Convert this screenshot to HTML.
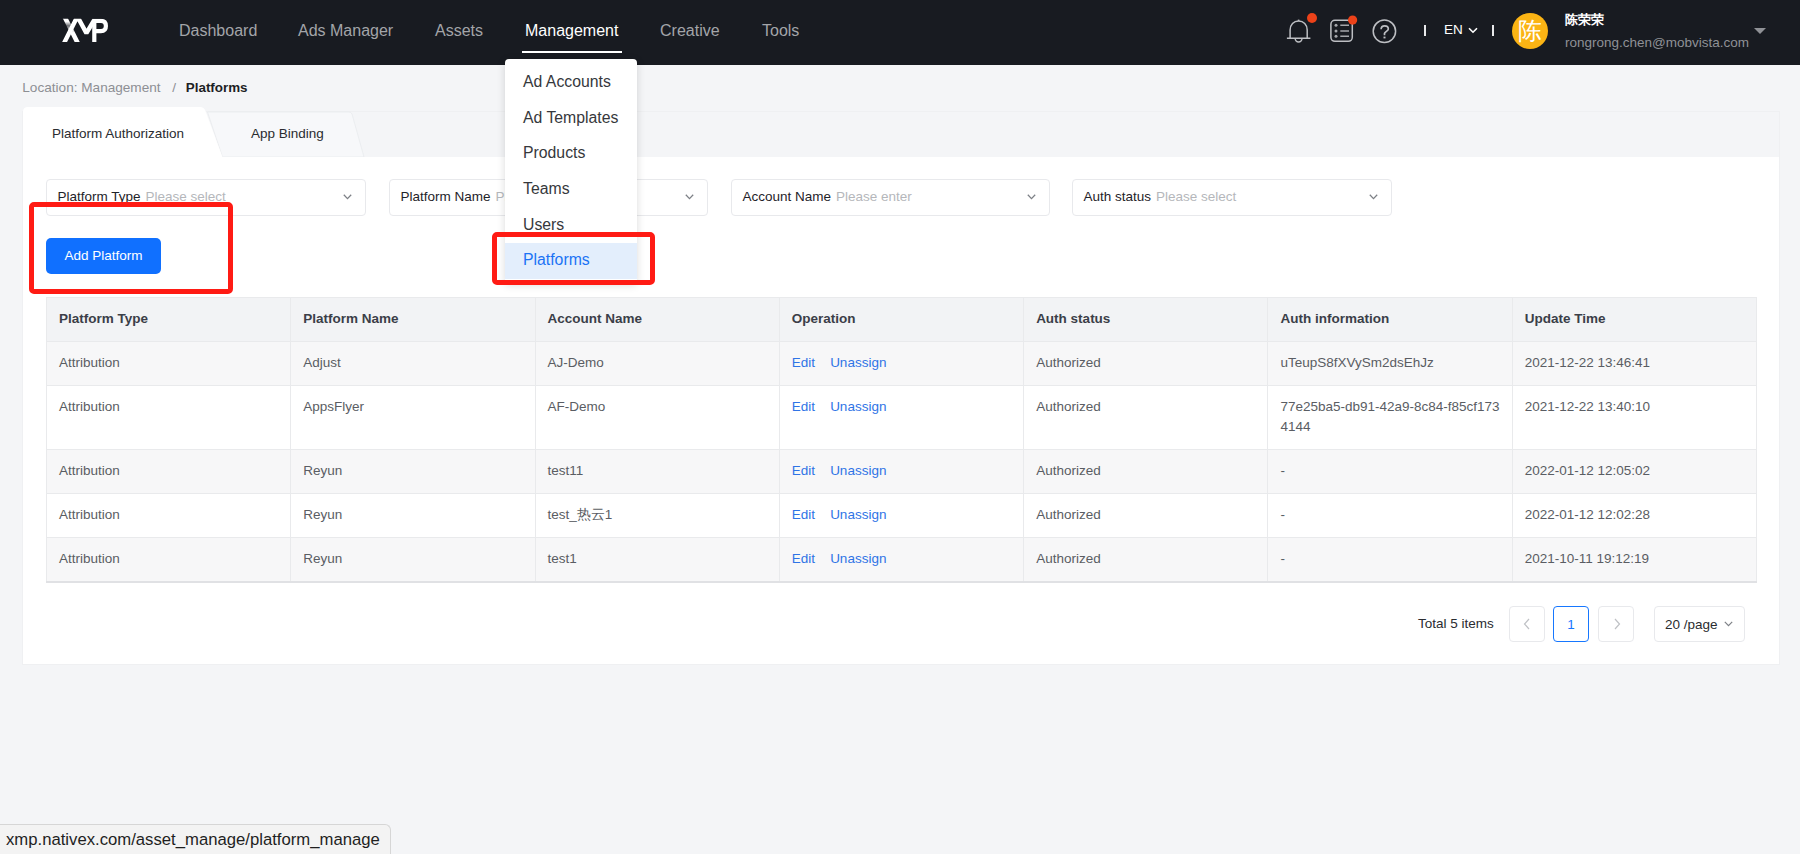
<!DOCTYPE html>
<html><head><meta charset="utf-8">
<style>
*{box-sizing:border-box;margin:0;padding:0}
html,body{width:1800px;height:854px;overflow:hidden}
body{background:#f4f5f7;font-family:"Liberation Sans",sans-serif;position:relative;color:#333}
.abs{position:absolute;white-space:nowrap}
#hdr{position:absolute;left:0;top:0;width:1800px;height:65px;background:#181b21}
.nav{position:absolute;top:22px;font-size:16px;line-height:18px;color:#a3a5a9}
.nav.act{color:#fff}
#uline{position:absolute;left:522px;top:51px;width:100px;height:2px;background:#fff}
#crumb{position:absolute;left:22.3px;top:80px;font-size:13.6px;line-height:16px;color:#8d8f94}
#crumb b{color:#1d1f24}
#card{position:absolute;left:23px;top:112px;width:1756px;height:552px;background:#fff;box-shadow:0 0 0 1px #eff0f2}
#tabbar{position:absolute;left:0;top:0;width:1756px;height:45px;background:#f4f5f7}
.filt{position:absolute;top:179px;height:37px;width:320px;border:1px solid #e8e9ec;border-radius:4px;background:#fff}
.filt .lab{position:absolute;left:10.5px;top:9px;font-size:13.5px;line-height:16px;color:#1f2329}
.filt .ph{color:#b5b7bb;margin-left:5px}
.chev{position:absolute;right:13px;top:14px;width:9px;height:6px}
#addbtn{position:absolute;left:46px;top:238px;width:115px;height:36px;border-radius:5px;background:#1070ff;color:#fff;font-size:13.5px;line-height:36px;text-align:center}
table{position:absolute;left:46px;top:297px;border-collapse:collapse;width:1711px;table-layout:fixed}
td,th{border:1px solid #e9eaec;text-align:left;vertical-align:top;font-size:13.5px;line-height:20px;padding:11px 12px 12px 12px;color:#5a5d63;font-weight:normal}
th{background:#f2f3f5;color:#3b3e48;font-weight:bold}
tr.g td{background:#f7f7f8}
tr:last-child td{border-bottom:2px solid #e0e1e4}
tr.w td{background:#fff}
.lnk{color:#2f74e6}
#pager{position:absolute;top:606px}
.pbtn{position:absolute;top:606px;height:36px;border:1px solid #e8e9ec;border-radius:4px;background:#fff}
#drop{position:absolute;left:505px;top:59px;width:132px;height:224px;background:#fff;border-radius:4px;box-shadow:0 2px 8px rgba(0,0,0,.15)}
.mi{position:absolute;left:18px;font-size:15.8px;line-height:18px;color:#36383c}
#hl{position:absolute;left:0;top:184px;width:132px;height:36px;background:#e3eefc}
.red{position:absolute;border:5px solid #ff1b14;border-radius:5px}
#status{position:absolute;left:0;top:824px;width:391px;height:32px;background:#f3f3f3;border:1px solid #d6d6d6;border-left:none;border-bottom:none;border-top-right-radius:6px;font-size:16.7px;line-height:30px;color:#1f1f1f;padding-left:6px}
</style></head>
<body>
<div id="hdr">
  <svg class="abs" style="left:58px;top:15px" width="54" height="31" viewBox="0 0 54 31">
    <defs>
      <linearGradient id="xg" x1="0" y1="3.8" x2="0" y2="27" gradientUnits="userSpaceOnUse"><stop offset="0.12" stop-color="#fff"/><stop offset="0.3" stop-color="#6d6f73"/><stop offset="0.48" stop-color="#d0d0d0"/><stop offset="0.6" stop-color="#fff"/></linearGradient>
      <clipPath id="lc"><rect x="0" y="3.8" width="54" height="23.2"/></clipPath>
    </defs>
    <g clip-path="url(#lc)">
      <path d="M5.2 -1 L21.2 31" stroke="url(#xg)" stroke-width="4.6" fill="none"/>
      <path d="M4.6 31 L19.4 1.5 L28.4 18.1 L36 5.5" stroke="#fff" stroke-width="4.4" fill="none" stroke-linejoin="bevel"/>
      <path d="M36.3 27 V5.8 H43 C46.3 5.8 47.9 8 47.9 11 C47.9 14 46.3 16.1 43 16.1 H38" stroke="#fff" stroke-width="4.2" fill="none"/>
    </g>
  </svg>
  <div class="nav" style="left:179px">Dashboard</div>
  <div class="nav" style="left:298px">Ads Manager</div>
  <div class="nav" style="left:435px">Assets</div>
  <div class="nav act" style="left:525px">Management</div>
  <div class="nav" style="left:660px">Creative</div>
  <div class="nav" style="left:762px">Tools</div>
  <div id="uline"></div>

  <svg class="abs" style="left:1284px;top:10px" width="36" height="36" viewBox="0 -4 36 36">
    <path d="M2.9 24.3 H26.4 M6.1 24.3 V16 C6.1 10.5 9.7 7 14.6 7 C19.5 7 23.2 10.5 23.2 16 V24.3" fill="none" stroke="#bdbfc3" stroke-width="1.5"/>
    <path d="M14.6 5.6 V7" stroke="#bdbfc3" stroke-width="1.6"/>
    <path d="M11.2 24.6 A3.4 3.4 0 0 0 18 24.6" fill="none" stroke="#bdbfc3" stroke-width="1.5"/>
    <circle cx="28" cy="4" r="5" fill="#ec4219"/>
  </svg>
  <svg class="abs" style="left:1328px;top:14px" width="32" height="32" viewBox="0 0 32 32">
    <rect x="2.9" y="6.3" width="21.4" height="21" rx="4" fill="none" stroke="#bdbfc3" stroke-width="1.5"/>
    <circle cx="8" cy="11.3" r="1.5" fill="#a4a6aa"/><circle cx="8" cy="17" r="1.5" fill="#a4a6aa"/><circle cx="8" cy="22.3" r="1.5" fill="#a4a6aa"/>
    <path d="M12.3 11.3 H21 M12.3 17 H21 M12.3 22.3 H21" stroke="#a4a6aa" stroke-width="1.6"/>
    <circle cx="24.6" cy="6.1" r="4.6" fill="#ec4219"/>
  </svg>
  <svg class="abs" style="left:1371px;top:18px" width="27" height="27" viewBox="0 0 27 27">
    <circle cx="13.4" cy="13.3" r="11.2" fill="none" stroke="#bdbfc3" stroke-width="1.5"/>
    <path d="M10.1 11.2 C10.1 9 11.6 7.8 13.7 7.8 C15.8 7.8 17.3 9.1 17.3 10.9 C17.3 12.9 14.2 13.5 13.5 15.4 V17.3" fill="none" stroke="#bdbfc3" stroke-width="1.7"/>
    <rect x="12.5" y="18.6" width="2" height="1.8" fill="#bdbfc3"/>
  </svg>
  <div class="abs" style="left:1424px;top:25px;width:2px;height:11px;background:#e8e9eb"></div>
  <div class="abs" style="left:1444px;top:22px;font-size:13.5px;line-height:16px;color:#fff">EN</div>
  <svg class="abs" style="left:1468px;top:27px" width="10" height="7" viewBox="0 0 10 7"><path d="M1 1.2 L5 5.2 L9 1.2" fill="none" stroke="#fff" stroke-width="1.6"/></svg>
  <div class="abs" style="left:1492px;top:25px;width:2px;height:11px;background:#e8e9eb"></div>
  <div class="abs" style="left:1512px;top:13px;width:36px;height:36px;border-radius:50%;background:#fbb414;color:#fff;font-size:24px;line-height:36px;text-align:center">陈</div>
  <div class="abs" style="left:1565px;top:12px;font-size:13px;line-height:16px;color:#fff;font-weight:bold">陈荣荣</div>
  <div class="abs" style="left:1565px;top:35px;font-size:13.5px;line-height:16px;color:#8f9196">rongrong.chen@mobvista.com</div>
  <svg class="abs" style="left:1754px;top:28px" width="12" height="6" viewBox="0 0 12 6"><path d="M0 0 H12 L6 6 Z" fill="#8f9196"/></svg>
</div>

<div id="crumb">Location: Management<span style="position:absolute;left:150px">/</span><b style="position:absolute;left:163.5px;font-size:13.4px">Platforms</b></div>

<div id="card">
  <div id="tabbar"></div>
  <svg class="abs" style="left:0;top:-5px" width="360" height="50" viewBox="0 0 360 50">
    <path d="M184.5 5 H326 Q328 5 329 7 L341 50 H199.5 Z" fill="#f7f8fa" stroke="#e9ebee" stroke-width="0.8"/>
    <path d="M0 5 Q0 0 5 0 H177 Q181 0 182.5 4 L199.5 50 H0 Z" fill="#fff"/>
  </svg>
  <div class="abs" style="left:29px;top:14px;font-size:13.5px;line-height:16px;color:#2a2c30">Platform Authorization</div>
  <div class="abs" style="left:228px;top:14px;font-size:13.5px;line-height:16px;color:#2a2c30">App Binding</div>
</div>


<div class="filt" style="left:46px"><div class="lab">Platform Type<span class="ph">Please select</span></div><svg class="chev" viewBox="0 0 9 6"><path d="M0.8 0.8 L4.5 4.6 L8.2 0.8" fill="none" stroke="#7d8086" stroke-width="1.3"/></svg></div>
<div class="filt" style="left:389px;width:319px"><div class="lab">Platform Name<span class="ph">Please enter</span></div><svg class="chev" viewBox="0 0 9 6"><path d="M0.8 0.8 L4.5 4.6 L8.2 0.8" fill="none" stroke="#7d8086" stroke-width="1.3"/></svg></div>
<div class="filt" style="left:731px;width:319px"><div class="lab">Account Name<span class="ph">Please enter</span></div><svg class="chev" viewBox="0 0 9 6"><path d="M0.8 0.8 L4.5 4.6 L8.2 0.8" fill="none" stroke="#7d8086" stroke-width="1.3"/></svg></div>
<div class="filt" style="left:1072px"><div class="lab">Auth status<span class="ph">Please select</span></div><svg class="chev" viewBox="0 0 9 6"><path d="M0.8 0.8 L4.5 4.6 L8.2 0.8" fill="none" stroke="#7d8086" stroke-width="1.3"/></svg></div>
<div id="addbtn">Add Platform</div>
<table><colgroup><col style="width:244px"><col style="width:244px"><col style="width:244px"><col style="width:244px"><col style="width:244px"><col style="width:244px"><col style="width:244px"></colgroup>
<tr><th>Platform Type</th><th>Platform Name</th><th>Account Name</th><th>Operation</th><th>Auth status</th><th>Auth information</th><th>Update Time</th></tr>
<tr class="g"><td>Attribution</td><td>Adjust</td><td>AJ-Demo</td><td><span class="lnk">Edit</span>&nbsp;&nbsp;&nbsp; <span class="lnk">Unassign</span></td><td>Authorized</td><td>uTeupS8fXVySm2dsEhJz</td><td>2021-12-22 13:46:41</td></tr>
<tr class="w"><td>Attribution</td><td>AppsFlyer</td><td>AF-Demo</td><td><span class="lnk">Edit</span>&nbsp;&nbsp;&nbsp; <span class="lnk">Unassign</span></td><td>Authorized</td><td style="white-space:nowrap">77e25ba5-db91-42a9-8c84-f85cf173<br>4144</td><td>2021-12-22 13:40:10</td></tr>
<tr class="g"><td>Attribution</td><td>Reyun</td><td>test11</td><td><span class="lnk">Edit</span>&nbsp;&nbsp;&nbsp; <span class="lnk">Unassign</span></td><td>Authorized</td><td>-</td><td>2022-01-12 12:05:02</td></tr>
<tr class="w"><td>Attribution</td><td>Reyun</td><td>test_热云1</td><td><span class="lnk">Edit</span>&nbsp;&nbsp;&nbsp; <span class="lnk">Unassign</span></td><td>Authorized</td><td>-</td><td>2022-01-12 12:02:28</td></tr>
<tr class="g"><td>Attribution</td><td>Reyun</td><td>test1</td><td><span class="lnk">Edit</span>&nbsp;&nbsp;&nbsp; <span class="lnk">Unassign</span></td><td>Authorized</td><td>-</td><td>2021-10-11 19:12:19</td></tr>
</table>

<div class="abs" style="left:1418px;top:615.5px;font-size:13.5px;line-height:16px;color:#2a2c30">Total 5 items</div>
<div class="pbtn" style="left:1509px;width:36px"><svg class="abs" style="left:13px;top:11px" width="8" height="12" viewBox="0 0 8 12"><path d="M6 1 L1.5 6 L6 11" fill="none" stroke="#bfc1c5" stroke-width="1.2"/></svg></div>
<div class="pbtn" style="left:1553px;width:36px;border-color:#1677ff;color:#1677ff;font-size:13.5px;line-height:36px;text-align:center">1</div>
<div class="pbtn" style="left:1598px;width:36px"><svg class="abs" style="left:14px;top:11px" width="8" height="12" viewBox="0 0 8 12"><path d="M2 1 L6.5 6 L2 11" fill="none" stroke="#bfc1c5" stroke-width="1.2"/></svg></div>
<div class="pbtn" style="left:1654px;width:91px"><span class="abs" style="left:10px;top:10px;font-size:13.5px;line-height:16px;color:#2a2c30">20 /page</span><svg class="abs" style="left:69px;top:14px" width="9" height="6" viewBox="0 0 9 6"><path d="M0.8 0.8 L4.5 4.6 L8.2 0.8" fill="none" stroke="#7d8086" stroke-width="1.2"/></svg></div>

<div id="drop">
  <div class="mi" style="top:14px">Ad Accounts</div>
  <div class="mi" style="top:50px">Ad Templates</div>
  <div class="mi" style="top:85px">Products</div>
  <div class="mi" style="top:121px">Teams</div>
  <div class="mi" style="top:157px">Users</div>
  <div id="hl"></div>
  <div class="mi" style="top:192px;color:#1b73f5">Platforms</div>
</div>

<div class="red" style="left:29px;top:202px;width:204px;height:92px"></div>
<div class="red" style="left:492px;top:232px;width:163px;height:53px"></div>

<div id="status">xmp.nativex.com/asset_manage/platform_manage</div>
</body></html>
